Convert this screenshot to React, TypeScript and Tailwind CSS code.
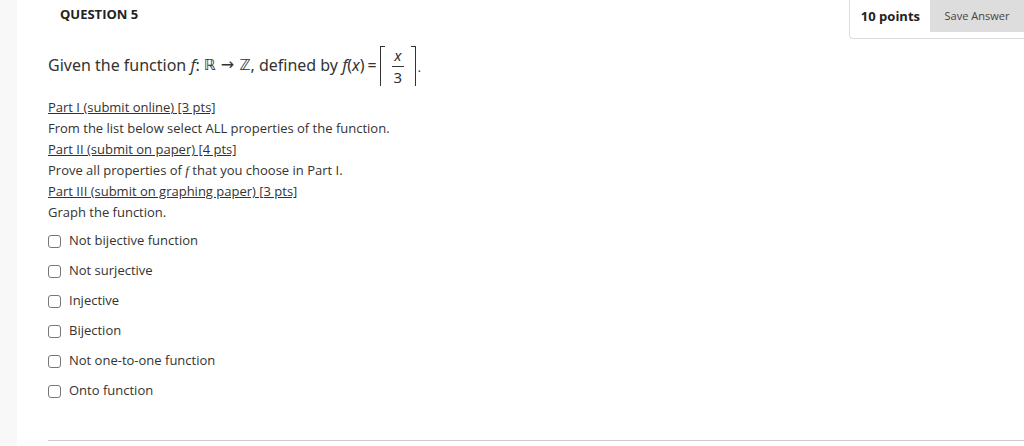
import React from "react";

const options = [
  "Not bijective function",
  "Not surjective",
  "Injective",
  "Bijection",
  "Not one-to-one function",
  "Onto function",
];

export default function App() {
  return (
    <div className="flex h-[446px] w-[1024px] overflow-hidden bg-white text-[#333]" style={{ fontFamily: '"Open Sans", sans-serif' }}>
      <div className="w-[17px] shrink-0 bg-[#f8f8f8]" />
      <div className="relative flex-1">
        <div className="absolute right-0 top-0 flex h-[39px] items-start rounded-bl-[4px] border-b border-l border-[#ddd] bg-white pl-[11px]">
          <span className="mt-[7px] text-[13px] font-bold text-[#222]">10 points</span>
          <button className="ml-[10px] h-[32px] w-[94px] bg-[#ddd] text-[11px] text-[#444]">Save Answer</button>
        </div>

        <div className="pl-[43px] pt-[5px]">
          <h2 className="text-[13px] font-bold leading-[18px] text-[#222]">QUESTION 5</h2>
        </div>

        <div className="pl-[31px]">
          <div className="mt-[21px] flex h-[42px] items-center text-[16px] text-[#333]" style={{ fontFamily: '"Noto Sans", sans-serif' }}>
            <span>Given the function&nbsp;</span>
            <span className="italic">f</span>
            <span>:&nbsp;</span>
            <span style={{ fontFamily: '"DejaVu Sans", sans-serif' }} className="text-[15px]">ℝ</span>
            <span className="mx-[5px] text-[16px]" style={{ fontFamily: '"DejaVu Sans", sans-serif' }}>→</span>
            <span style={{ fontFamily: '"DejaVu Sans", sans-serif' }} className="text-[15px]">ℤ</span>
            <span>, defined by&nbsp;</span>
            <span className="italic">f</span>
            <span>(</span>
            <span className="italic">x</span>
            <span>)</span>
            <span className="mx-[3px]">=</span>
            <span className="mt-[2px] flex h-[40px] items-stretch">
              <span className="w-[5px] border-l-[1.5px] border-t-[1.5px] border-[#333]" />
              <span className="flex flex-col items-center justify-center px-[7px] text-[15px] leading-[17px]">
                <span className="italic">x</span>
                <span className="my-[2px] h-px w-[12px] bg-[#333]" />
                <span>3</span>
              </span>
              <span className="w-[5px] border-r-[1.5px] border-t-[1.5px] border-[#333]" />
            </span>
            <span className="ml-[2px] mt-[6px] text-[12px] text-[#333]">.</span>
          </div>

          <div className="mt-[11px] text-[13px] leading-[21px] text-[#333]">
            <div className="underline">Part I (submit online) [3 pts]</div>
            <div>From the list below select ALL properties of the function.</div>
            <div className="underline">Part II (submit on paper) [4 pts]</div>
            <div>
              Prove all properties of <span className="italic" style={{ fontFamily: '"Liberation Serif", serif' }}>f</span> that you choose in Part I.
            </div>
            <div className="underline">Part III (submit on graphing paper) [3 pts]</div>
            <div>Graph the function.</div>
          </div>

          <ul className="mt-[3px] flex flex-col">
            {options.map((o) => (
              <li key={o} className="flex h-[30px] items-center text-[13px]">
                <span className="h-[13px] w-[13px] rounded-[3px] border border-[#767676] bg-white" />
                <span className="ml-[8px]">{o}</span>
              </li>
            ))}
          </ul>

          <div className="mt-[34px] h-px bg-[#ccc]" />
        </div>
      </div>
    </div>
  );
}
